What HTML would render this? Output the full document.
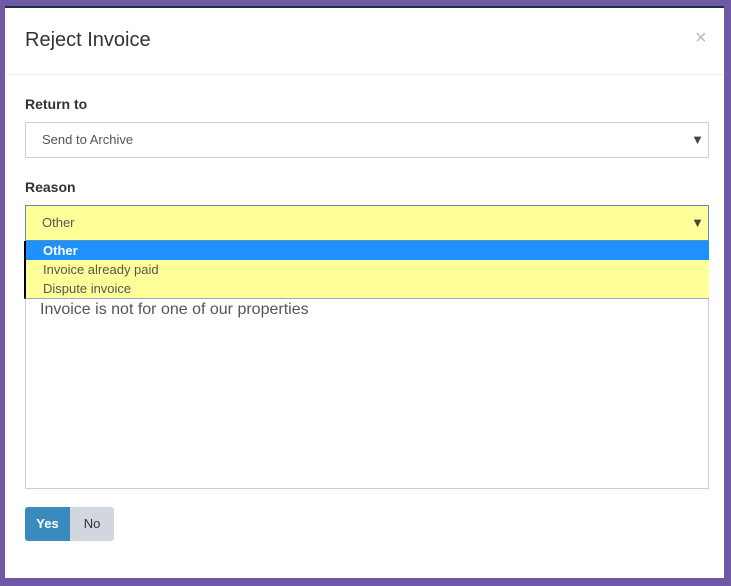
<!DOCTYPE html>
<html><head><style>
*{margin:0;padding:0;box-sizing:border-box}
body{width:731px;height:586px;background:#6f58a5;font-family:"Liberation Sans",sans-serif;position:relative;overflow:hidden}
.m{position:absolute;left:5px;top:6px;width:719px;height:572px;background:#fff;border-top:2px solid #1f2f3f}
.a{position:absolute}
.t{left:25px;top:29px;font-size:20px;color:#333}
.x{left:695px;top:27px;font-size:20px;color:#bbb}
.hr{left:7px;top:74px;width:717px;height:1px;background:#eee}
.l{font-size:14px;font-weight:bold;color:#333}
.sel{border:1px solid #ccd;font-size:13px;color:#555;padding-left:16px;line-height:34px}
.arr{position:absolute;right:4px;top:0;font-size:13px;color:#444}
</style></head><body>
<div class="m"></div>
<div class="a t">Reject Invoice</div>
<div class="a x">×</div>
<div class="a hr"></div>
<div class="a l" style="left:25px;top:96px">Return to</div>
<div class="a sel" style="left:25px;top:122px;width:684px;height:36px">Send to Archive<span class="arr">▼</span></div>
<div class="a l" style="left:25px;top:179px">Reason</div>
<div class="a sel" style="left:25px;top:205px;width:684px;height:36px;background:#ffff99;border-color:#5a8fb8">Other<span class="arr">▼</span></div>
<div class="a" style="left:25px;top:290px;width:684px;height:199px;border:1px solid #ccd;padding:10px 14px;font-size:16px;color:#555">Invoice is not for one of our properties</div>
<div class="a" style="left:24px;top:241px;width:685px;height:58px;background:#ffff99;border-left:2px solid #000;border-bottom:1px solid #9ab;font-size:13px;color:#555;line-height:19px">
<div style="background:#1e90ff;color:#fff;font-weight:bold;padding-left:17px;height:19px">Other</div>
<div style="padding-left:17px">Invoice already paid</div>
<div style="padding-left:17px">Dispute invoice</div>
</div>
<div class="a" style="left:25px;top:507px;width:45px;height:34px;background:#3a8bbd;color:#fff;font-size:13px;font-weight:bold;text-align:center;line-height:34px;border-radius:3px 0 0 3px">Yes</div>
<div class="a" style="left:70px;top:507px;width:44px;height:34px;background:#d2d6de;color:#333;font-size:13px;text-align:center;line-height:34px;border-radius:0 3px 3px 0">No</div>
</body></html>
